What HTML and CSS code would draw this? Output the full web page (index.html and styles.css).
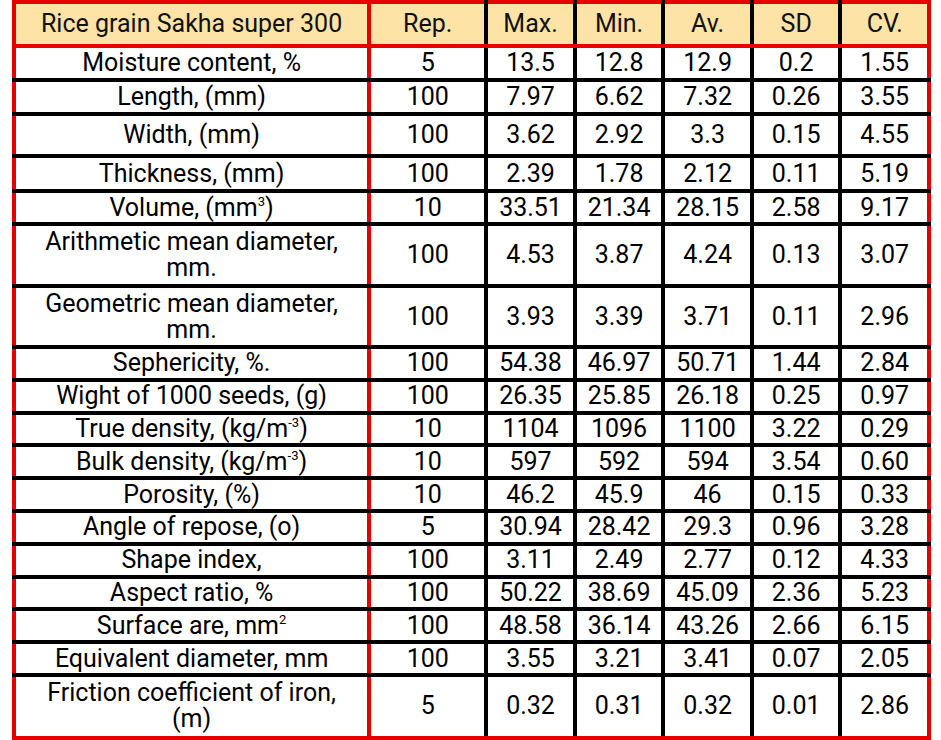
FILE: index.html
```html
<!DOCTYPE html>
<html>
<head>
<meta charset="utf-8">
<link rel="stylesheet" href="styles.css">
</head>
<body>
<table class="grid">
  <colgroup>
    <col class="c-label"><col class="c-rep"><col class="c-n"><col class="c-n"><col class="c-n"><col class="c-n"><col class="c-n">
  </colgroup>
  <thead>
    <tr class="h-head"><th class="label">Rice grain Sakha super 300</th><th class="rep">Rep.</th><th>Max.</th><th>Min.</th><th>Av.</th><th>SD</th><th>CV.</th></tr>
  </thead>
  <tbody>
    <tr class="h34"><td class="label">Moisture content, %</td><td class="rep">5</td><td>13.5</td><td>12.8</td><td>12.9</td><td>0.2</td><td>1.55</td></tr>
    <tr class="h34"><td class="label">Length, (mm)</td><td class="rep">100</td><td>7.97</td><td>6.62</td><td>7.32</td><td>0.26</td><td>3.55</td></tr>
    <tr class="h42"><td class="label">Width, (mm)</td><td class="rep">100</td><td>3.62</td><td>2.92</td><td>3.3</td><td>0.15</td><td>4.55</td></tr>
    <tr class="h35"><td class="label">Thickness, (mm)</td><td class="rep">100</td><td>2.39</td><td>1.78</td><td>2.12</td><td>0.11</td><td>5.19</td></tr>
    <tr class="h33"><td class="label">Volume, (mm<sup>3</sup>)</td><td class="rep">10</td><td>33.51</td><td>21.34</td><td>28.15</td><td>2.58</td><td>9.17</td></tr>
    <tr class="h62"><td class="label">Arithmetic mean diameter,<br>mm.</td><td class="rep">100</td><td>4.53</td><td>3.87</td><td>4.24</td><td>0.13</td><td>3.07</td></tr>
    <tr class="h61"><td class="label">Geometric mean diameter,<br>mm.</td><td class="rep">100</td><td>3.93</td><td>3.39</td><td>3.71</td><td>0.11</td><td>2.96</td></tr>
    <tr class="hs"><td class="label">Sephericity, %.</td><td class="rep">100</td><td>54.38</td><td>46.97</td><td>50.71</td><td>1.44</td><td>2.84</td></tr>
    <tr class="hs"><td class="label">Wight of 1000 seeds, (g)</td><td class="rep">100</td><td>26.35</td><td>25.85</td><td>26.18</td><td>0.25</td><td>0.97</td></tr>
    <tr class="hs"><td class="label">True density, (kg/m<sup>-3</sup>)</td><td class="rep">10</td><td>1104</td><td>1096</td><td>1100</td><td>3.22</td><td>0.29</td></tr>
    <tr class="hs"><td class="label">Bulk density, (kg/m<sup>-3</sup>)</td><td class="rep">10</td><td>597</td><td>592</td><td>594</td><td>3.54</td><td>0.60</td></tr>
    <tr class="hs"><td class="label">Porosity, (%)</td><td class="rep">10</td><td>46.2</td><td>45.9</td><td>46</td><td>0.15</td><td>0.33</td></tr>
    <tr class="hs"><td class="label">Angle of repose, (o)</td><td class="rep">5</td><td>30.94</td><td>28.42</td><td>29.3</td><td>0.96</td><td>3.28</td></tr>
    <tr class="hs"><td class="label">Shape index,</td><td class="rep">100</td><td>3.11</td><td>2.49</td><td>2.77</td><td>0.12</td><td>4.33</td></tr>
    <tr class="hs"><td class="label">Aspect ratio, %</td><td class="rep">100</td><td>50.22</td><td>38.69</td><td>45.09</td><td>2.36</td><td>5.23</td></tr>
    <tr class="hs"><td class="label">Surface are, mm<sup>2</sup></td><td class="rep">100</td><td>48.58</td><td>36.14</td><td>43.26</td><td>2.66</td><td>6.15</td></tr>
    <tr class="hs"><td class="label">Equivalent diameter, mm</td><td class="rep">100</td><td>3.55</td><td>3.21</td><td>3.41</td><td>0.07</td><td>2.05</td></tr>
    <tr class="h63"><td class="label">Friction coefficient of iron,<br>(m)</td><td class="rep">5</td><td>0.32</td><td>0.31</td><td>0.32</td><td>0.01</td><td>2.86</td></tr>
  </tbody>
</table>
</body>
</html>
```

FILE: styles.css
```css
html, body {
  margin: 0;
  padding: 0;
  background: #ffffff;
}

.grid {
  margin-left: 12px;
  border-collapse: collapse;
  table-layout: fixed;
  width: 919px;
  border: 4px solid #e60000;
  font-family: Roboto, "Liberation Sans", sans-serif;
  font-size: 25px;
  color: #000;
}

.c-label { width: 355px; }
.c-rep { width: 117px; }
.c-n { width: 88.5px; }

.grid th,
.grid td {
  padding: 0 2px;
  text-align: center;
  vertical-align: middle;
  line-height: 26px;
  border: 4px solid #000;
  font-weight: 400;
}

.grid thead th {
  background: #fde3a6;
  color: #111;
  border-top: 4px solid #e60000;
  border-bottom: 4px solid #e60000;
}

.grid .label {
  border-left: 4px solid #e60000;
  border-right: 4px solid #e60000;
}

.grid tr > :last-child {
  border-right: 4px solid #e60000;
}

.grid tbody tr:last-child td {
  border-bottom: 4px solid #e60000;
}

.grid sup {
  font-size: 13px;
  line-height: 0;
  vertical-align: 10px;
}

.h-head { height: 44px; }
.h33 { height: 33px; }
.h34 { height: 34px; }
.h35 { height: 35px; }
.h42 { height: 42px; }
.h61 { height: 61px; }
.h62 { height: 62px; }
.h63 { height: 63px; }
.hs { height: 32.8px; }
```
